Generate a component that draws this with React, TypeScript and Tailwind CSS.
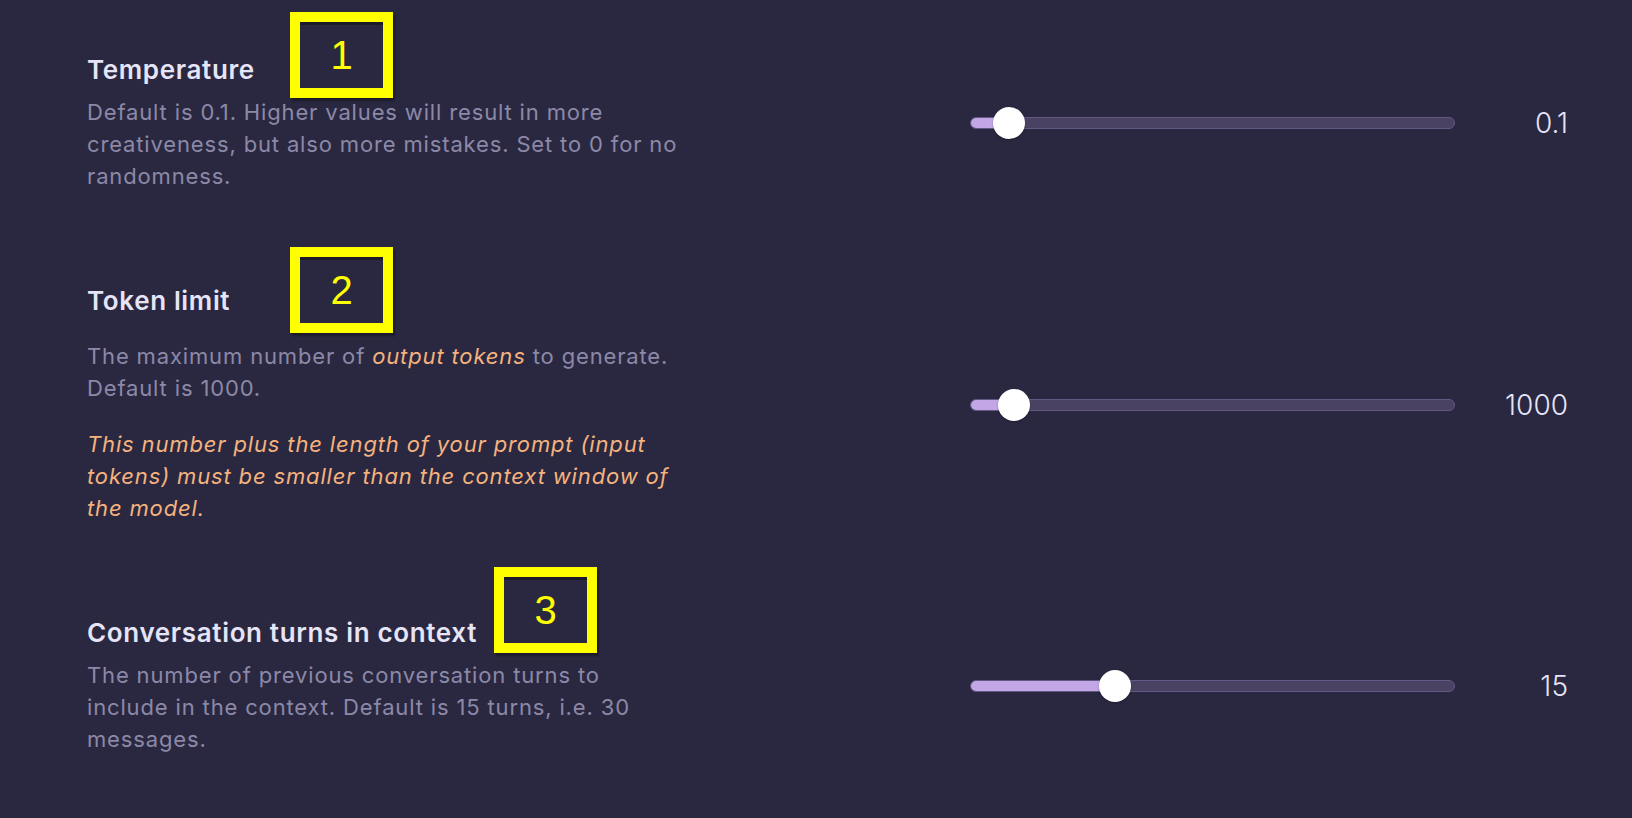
import type { ReactNode } from "react";

interface MarkerProps {
  n: number;
  className: string;
}

// yellow annotation box drawn over the screenshot
function Marker({ n, className }: MarkerProps) {
  return (
    <div
      className={`absolute flex h-[86px] w-[103px] items-center justify-center border-[10px] border-[#ffff00] shadow-[inset_0_3px_0_rgba(0,0,0,0.35),2px_3px_2px_rgba(0,0,0,0.35)] ${className}`}
    >
      <span className="text-[40px] leading-none text-[#ffff00] [font-family:'Liberation_Sans',Arial,sans-serif]">
        {n}
      </span>
    </div>
  );
}

interface SliderProps {
  pct: number;
  value: string;
}

function Slider({ pct, value }: SliderProps) {
  // thumb travels inside the track, so keep its centre 16px from the ends
  const left = `calc(${pct}% - ${(pct / 100) * 32}px)`;
  return (
    <div className="ml-auto flex items-center">
      <div className="relative h-[32px] w-[485px]">
        <div className="absolute inset-x-0 top-[10px] h-[12px] overflow-hidden rounded-full border border-[#625a84] bg-[#4a4263]">
          <div
            className="h-full bg-[#c3a6e6]"
            style={{ width: `calc(${left} + 16px)` }}
          />
        </div>
        <div
          className="absolute top-0 h-[32px] w-[32px] rounded-full bg-white shadow-[0_1px_2px_rgba(0,0,0,0.3)]"
          style={{ left }}
        />
      </div>
      <div className="w-[113px] text-right text-[28px] font-light leading-none text-[#e6e4f7]">
        {value}
      </div>
    </div>
  );
}

interface SettingProps {
  title: string;
  marker: ReactNode;
  children: ReactNode;
  slider: ReactNode;
}

function Setting({ title, marker, children, slider }: SettingProps) {
  return (
    <div className="flex items-center">
      <div className="relative w-[598px]">
        <h3 className="text-[26px] font-semibold leading-[32px] tracking-[0.65px] text-[#e6e4f7]">
          {title}
        </h3>
        {marker}
        {children}
      </div>
      {slider}
    </div>
  );
}

export default function App() {
  return (
    <div className="min-h-[818px] bg-[#2a2840] pl-[87px] pr-[64px] pt-[54px] [font-family:Inter,'Noto_Sans',sans-serif]">
      <div className="flex flex-col gap-[93px]">
        <Setting
          title="Temperature"
          marker={<Marker n={1} className="left-[203px] top-[-42px]" />}
          slider={<Slider pct={5} value="0.1" />}
        >
          <p className="mt-[10px] text-[22px] leading-[32px] tracking-[0.85px] text-[#8c88a8]">
            Default is 0.1. Higher values will result in more creativeness, but
            also more mistakes. Set to 0 for no randomness.
          </p>
        </Setting>

        <Setting
          title="Token limit"
          marker={<Marker n={2} className="left-[203px] top-[-38px]" />}
          slider={<Slider pct={6.1} value="1000" />}
        >
          <p className="mt-[23px] text-[22px] leading-[32px] tracking-[0.85px] text-[#8c88a8]">
            The maximum number of{" "}
            <em className="text-[#f5b27e]">output tokens</em> to generate.
            Default is 1000.
          </p>
          <p className="mt-[24px] text-[22px] italic leading-[32px] tracking-[0.85px] text-[#f5b27e]">
            This number plus the length of your prompt (input tokens) must be
            smaller than the context window of the model.
          </p>
        </Setting>

        <Setting
          title="Conversation turns in context"
          marker={<Marker n={3} className="left-[407px] top-[-50px]" />}
          slider={<Slider pct={28.5} value="15" />}
        >
          <p className="mt-[10px] text-[22px] leading-[32px] tracking-[0.85px] text-[#8c88a8]">
            The number of previous conversation turns to include in the
            context. Default is 15 turns, i.e. 30 messages.
          </p>
        </Setting>
      </div>
    </div>
  );
}
